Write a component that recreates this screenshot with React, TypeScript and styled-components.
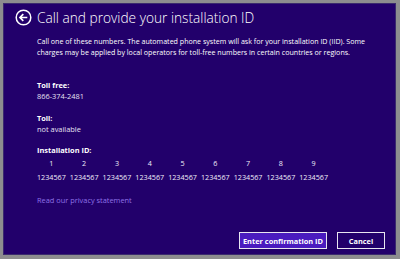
import React from 'react';
import styled, { createGlobalStyle } from 'styled-components';

const GlobalStyle = createGlobalStyle`
  html, body {
    margin: 0;
    padding: 0;
    background: #8d8d8f;
  }
  #root {
    width: 400px;
    height: 259px;
  }
`;

const Frame = styled.div`
  width: 400px;
  height: 259px;
  box-sizing: border-box;
  padding: 3px 4px 4px 3px;
  background: #8d8d8f;
`;

const Dialog = styled.div`
  height: 100%;
  box-sizing: border-box;
  background: #22006b;
  border: 1px solid #3b2a6e;
  display: flex;
  flex-direction: column;
  font-family: "Open Sans", "Noto Sans", sans-serif;
  color: #ffffff;
  padding: 2px 10px 5px 11px;
`;

const TitleRow = styled.div`
  display: flex;
  align-items: center;
  gap: 5px;
  height: 22px;
`;

const BackButton = styled.div`
  width: 17px;
  height: 17px;
  display: flex;
  align-items: center;
  justify-content: center;
`;

const Title = styled.h1`
  margin: 0;
  font-size: 13.7px;
  font-weight: 300;
  white-space: nowrap;
`;

const Body = styled.div`
  padding-left: 22px;
  display: flex;
  flex-direction: column;
  flex: 1;
`;

const Intro = styled.p`
  margin: 8px 0 0;
  font-size: 7.1px;
  line-height: 11px;
  white-space: nowrap;
`;

const Field = styled.div<{ $top: number }>`
  margin-top: ${({ $top }) => $top}px;
  display: flex;
  flex-direction: column;
`;

const Label = styled.div`
  font-size: 7.4px;
  font-weight: 700;
  line-height: 11px;
`;

const Value = styled.div`
  font-size: 7.4px;
  line-height: 11px;
  color: #e6e2f2;
`;

const IdGrid = styled.div`
  display: grid;
  grid-template-columns: repeat(9, auto);
  justify-content: start;
  column-gap: 4px;
  row-gap: 3px;
  margin-top: 2px;
  font-size: 7.2px;
  line-height: 11px;
`;

const IdCell = styled.div`
  text-align: center;
  color: #f0eef8;
`;

const Privacy = styled.a`
  margin-top: 12px;
  font-size: 7.4px;
  line-height: 11px;
  color: #8e72e6;
  text-decoration: none;
`;

const Actions = styled.div`
  margin-top: auto;
  display: flex;
  justify-content: flex-end;
  gap: 10px;
`;

const Button = styled.button<{ $primary?: boolean }>`
  height: 17px;
  box-sizing: border-box;
  border: 1.5px solid #e8e6f0;
  background: ${({ $primary }) => ($primary ? '#4a1bbf' : '#22006b')};
  color: #ffffff;
  font-family: "Open Sans", "Noto Sans", sans-serif;
  font-size: 7.4px;
  font-weight: 700;
  padding: 0;
  width: ${({ $primary }) => ($primary ? '88px' : '48px')};
`;

const ids = Array.from({ length: 9 }, (_, i) => i + 1);

export default function App() {
  return (
    <>
      <GlobalStyle />
      <Frame>
        <Dialog>
          <TitleRow>
            <BackButton>
              <svg width="17" height="17" viewBox="0 0 17 17">
                <circle cx="8.5" cy="8.5" r="7.3" fill="none" stroke="#fff" strokeWidth="1.5" />
                <path d="M12.3 8.5H5.2M8.3 5.2L5 8.5l3.3 3.3" fill="none" stroke="#fff" strokeWidth="1.7" />
              </svg>
            </BackButton>
            <Title>Call and provide your installation ID</Title>
          </TitleRow>
          <Body>
            <Intro>
              Call one of these numbers. The automated phone system will ask for your installation ID (IID). Some
              <br />
              charges may be applied by local operators for toll-free numbers in certain countries or regions.
            </Intro>
            <Field $top={22}>
              <Label>Toll free:</Label>
              <Value>866-374-2481</Value>
            </Field>
            <Field $top={11}>
              <Label>Toll:</Label>
              <Value>not available</Value>
            </Field>
            <Field $top={10}>
              <Label>Installation ID:</Label>
              <IdGrid>
                {ids.map((n) => (
                  <IdCell key={`h${n}`}>{n}</IdCell>
                ))}
                {ids.map((n) => (
                  <IdCell key={`v${n}`}>1234567</IdCell>
                ))}
              </IdGrid>
            </Field>
            <Privacy href="#">Read our privacy statement</Privacy>
          </Body>
          <Actions>
            <Button $primary>Enter confirmation ID</Button>
            <Button>Cancel</Button>
          </Actions>
        </Dialog>
      </Frame>
    </>
  );
}
